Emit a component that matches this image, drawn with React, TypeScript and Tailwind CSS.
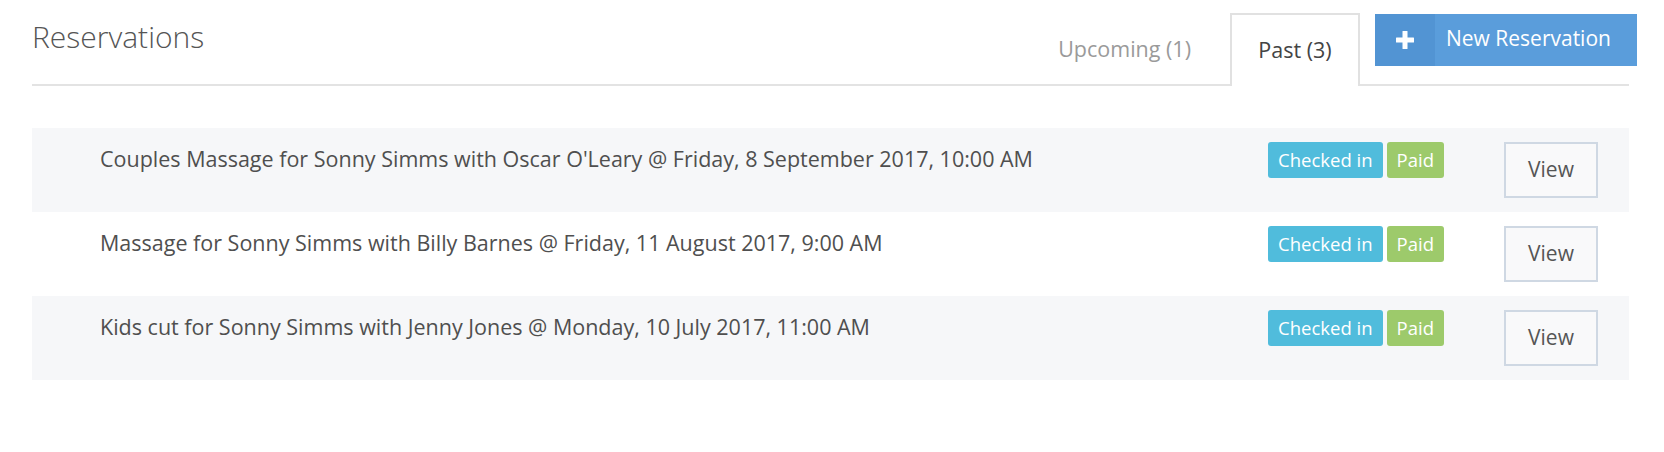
type Reservation = {
  id: number
  title: string
}

const reservations: Reservation[] = [
  { id: 1, title: "Couples Massage for Sonny Simms with Oscar O'Leary @ Friday, 8 September 2017, 10:00 AM" },
  { id: 2, title: 'Massage for Sonny Simms with Billy Barnes @ Friday, 11 August 2017, 9:00 AM' },
  { id: 3, title: 'Kids cut for Sonny Simms with Jenny Jones @ Monday, 10 July 2017, 11:00 AM' },
]

export default function App() {
  return (
    <main className="min-h-screen w-full bg-white pl-[32px] pr-[35px] font-['Open_Sans',sans-serif] text-[#505050]">

      {/* En-tête + onglets */}
      <div className="flex items-start h-[86px] border-b-2 border-[#e3e3e3]">
        <h1 className="flex-1 pt-[19px] text-[30px] leading-[36px] font-light text-[#555]">
          Reservations
        </h1>

        <div className="flex items-start h-full pt-[13px] -mr-[8px]">
          <button className="h-[73px] pl-[20px] pr-[38px] text-[21.5px] text-[#9a9a9a] leading-none pb-[2px]">
            Upcoming (1)
          </button>
          <button className="h-[73px] w-[130px] ml-[1px] bg-white border-2 border-b-0 border-[#e1e1e1] text-[21.5px] text-[#444] leading-none pb-[2px]">
            Past (3)
          </button>

          <button className="ml-[15px] mt-[1px] flex h-[52px] w-[262px] bg-[#5a9ddb] text-white">
            <span className="flex w-[60px] h-full items-center justify-center bg-[#5294d3]">
              <svg width="18" height="18" viewBox="0 0 18 18" fill="white">
                <rect x="6.5" y="0" width="5" height="18" rx="0.5" />
                <rect x="0" y="6.5" width="18" height="5" rx="0.5" />
              </svg>
            </span>
            <span className="flex-1 flex items-center pl-[11px] pb-[3px] text-[21px] leading-none">
              New Reservation
            </span>
          </button>
        </div>
      </div>

      {/* Liste */}
      <div className="mt-[42px] flex flex-col">
        {reservations.map((r, i) => (
          <div
            key={r.id}
            className={`flex items-start h-[84px] pt-[14px] pl-[68px] pr-[31px] ${i % 2 === 0 ? 'bg-[#f6f7f9]' : 'bg-white'}`}
          >
            <p className="flex-1 text-[21.5px] leading-[34px] text-[#4f4f4f]">
              {r.title}
            </p>

            <div className="flex gap-[4px]">
              <span className="flex items-center h-[36px] px-[10px] rounded-[3px] bg-[#50bcdc] text-white text-[18.5px]">
                Checked in
              </span>
              <span className="flex items-center h-[36px] px-[10px] rounded-[3px] bg-[#9dca6b] text-white text-[18.5px]">
                Paid
              </span>
            </div>

            <button className="ml-[60px] w-[94px] h-[56px] border-2 border-[#cfd8e3] bg-[#f9f9fa] text-[21px] text-[#555]">
              View
            </button>
          </div>
        ))}
      </div>
    </main>
  )
}
